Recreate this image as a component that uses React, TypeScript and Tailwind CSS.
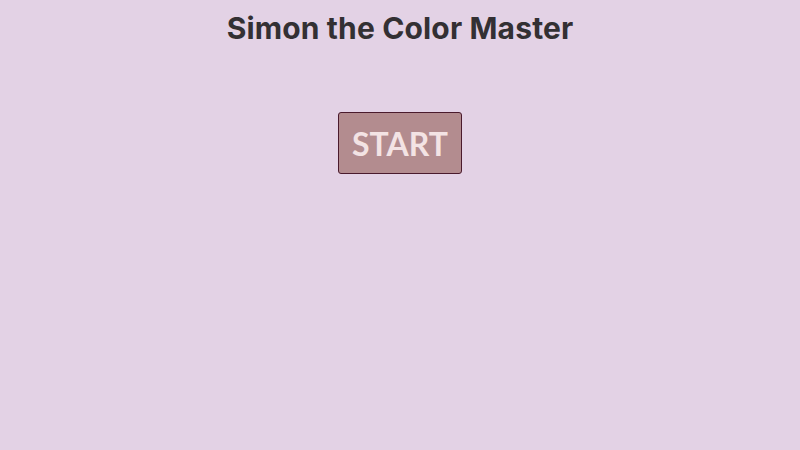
export default function App() {
  return (
    <div className="min-h-[450px] w-full bg-[#e3d2e5] flex flex-col items-center">
      <h1 className="mt-[9px] text-[30px] leading-[38px] font-bold text-[#333033] tracking-[0.15px] font-['Inter','Noto_Sans',sans-serif]">
        Simon the Color Master
      </h1>
      <button className="mt-[65px] w-[124px] h-[62px] pt-[2px] bg-[#b38c8f] border border-[#4a1a2c] rounded-[3px] text-[#f3e3e4] text-[32px] font-bold flex items-center justify-center font-['Lato','Open_Sans',sans-serif]">
        START
      </button>
    </div>
  );
}
